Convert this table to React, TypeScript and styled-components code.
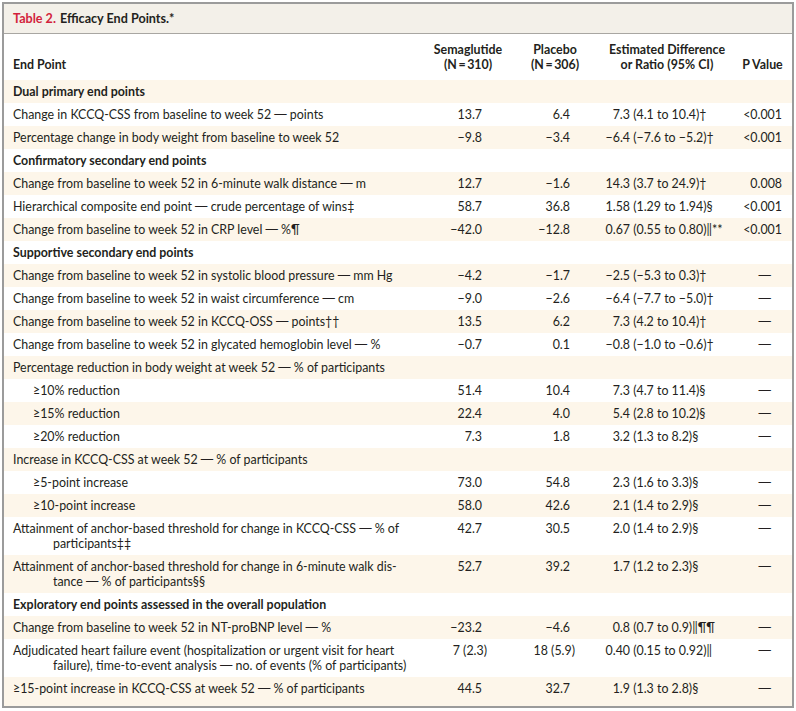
import React from 'react';
import styled, { createGlobalStyle } from 'styled-components';

const GlobalStyle = createGlobalStyle`
    html, body {
        margin: 0;
        padding: 0;
        background: #ffffff;
    }
    body {
        font-family: Lato, "Open Sans", "Liberation Sans", sans-serif;
        color: #231f20;
    }
`;

const Frame = styled.div`
    margin: 2px;
    width: 788px;
    border: 2px solid #9b9b9b;
    background: #ffffff;
`;

const TitleBar = styled.div`
    height: 29px;
    padding: 0 9px;
    display: flex;
    align-items: center;
    background: #f3f0e9;
    border-bottom: 1px solid #a8a6a2;
    font-size: 12.6px;
    font-weight: 700;
`;

const TableNo = styled.span`
    color: #d21f3c;
    margin-right: 4px;
`;

const Table = styled.table`
    width: 100%;
    border-collapse: collapse;
    table-layout: fixed;
    font-size: 12.4px;
    line-height: 15px;
`;

const HeadCell = styled.th<{ $align?: 'left' | 'center' }>`
    height: 46px;
    box-sizing: border-box;
    padding: 0 4px 8px;
    vertical-align: bottom;
    text-align: ${(p) => p.$align ?? 'center'};
    font-weight: 700;
    &:first-child {
        padding-left: 9px;
    }
`;

const Body = styled.tbody`
    tr:nth-child(odd) {
        background: #fdf6ea;
    }
    tr:last-child td {
        padding-bottom: 10px;
    }
`;

const Label = styled.td<{ $section?: boolean; $indent?: boolean }>`
    padding: 4px 0 4px ${(p) => (p.$indent ? 29 : 49)}px;
    text-indent: ${(p) => (p.$indent ? 0 : -40)}px;
    font-weight: ${(p) => (p.$section ? 700 : 400)};
    vertical-align: top;
`;

const Num = styled.td<{ $pad: number }>`
    padding: 4px ${(p) => p.$pad}px 4px 0;
    text-align: right;
    vertical-align: top;
    white-space: nowrap;
`;

const Estimate = styled.td`
    padding: 4px 0;
    vertical-align: top;
    white-space: nowrap;
`;

const Point = styled.span`
    display: inline-block;
    width: 29px;
    text-align: right;
`;

const PValue = styled.td<{ $dash?: boolean }>`
    padding: 4px ${(p) => (p.$dash ? 21 : 10)}px 4px 0;
    text-align: right;
    vertical-align: top;
    white-space: nowrap;
`;

// the humanist face has a short em dash; borrow a full-width one
const EmDash = styled.span`
    font-family: "Liberation Sans", Arial, sans-serif;
    font-weight: 400;
    line-height: 15px;
    vertical-align: top;
`;

const Hang = styled.span`
    margin-right: -5px;
`;

type Row = {
    label: string;
    section?: boolean;
    indent?: boolean;
    sema?: string;
    placebo?: string;
    point?: string;
    ci?: string;
    p?: string;
};

const rows: Row[] = [
    { label: 'Dual primary end points', section: true },
    { label: 'Change in KCCQ-CSS from baseline to week 52 — points', sema: '13.7', placebo: '6.4', point: '7.3', ci: '(4.1 to 10.4)†', p: '<0.001' },
    { label: 'Percentage change in body weight from baseline to week 52', sema: '−9.8', placebo: '−3.4', point: '−6.4', ci: '(−7.6 to −5.2)†', p: '<0.001' },
    { label: 'Confirmatory secondary end points', section: true },
    { label: 'Change from baseline to week 52 in 6-minute walk distance — m', sema: '12.7', placebo: '−1.6', point: '14.3', ci: '(3.7 to 24.9)†', p: '0.008' },
    { label: 'Hierarchical composite end point — crude percentage of wins‡', sema: '58.7', placebo: '36.8', point: '1.58', ci: '(1.29 to 1.94)§', p: '<0.001' },
    { label: 'Change from baseline to week 52 in CRP level — %¶', sema: '−42.0', placebo: '−12.8', point: '0.67', ci: '(0.55 to 0.80)‖**', p: '<0.001' },
    { label: 'Supportive secondary end points', section: true },
    { label: 'Change from baseline to week 52 in systolic blood pressure — mm Hg', sema: '−4.2', placebo: '−1.7', point: '−2.5', ci: '(−5.3 to 0.3)†', p: '—' },
    { label: 'Change from baseline to week 52 in waist circumference — cm', sema: '−9.0', placebo: '−2.6', point: '−6.4', ci: '(−7.7 to −5.0)†', p: '—' },
    { label: 'Change from baseline to week 52 in KCCQ-OSS — points††', sema: '13.5', placebo: '6.2', point: '7.3', ci: '(4.2 to 10.4)†', p: '—' },
    { label: 'Change from baseline to week 52 in glycated hemoglobin level — %', sema: '−0.7', placebo: '0.1', point: '−0.8', ci: '(−1.0 to −0.6)†', p: '—' },
    { label: 'Percentage reduction in body weight at week 52 — % of participants' },
    { label: '≥10% reduction', indent: true, sema: '51.4', placebo: '10.4', point: '7.3', ci: '(4.7 to 11.4)§', p: '—' },
    { label: '≥15% reduction', indent: true, sema: '22.4', placebo: '4.0', point: '5.4', ci: '(2.8 to 10.2)§', p: '—' },
    { label: '≥20% reduction', indent: true, sema: '7.3', placebo: '1.8', point: '3.2', ci: '(1.3 to 8.2)§', p: '—' },
    { label: 'Increase in KCCQ-CSS at week 52 — % of participants' },
    { label: '≥5-point increase', indent: true, sema: '73.0', placebo: '54.8', point: '2.3', ci: '(1.6 to 3.3)§', p: '—' },
    { label: '≥10-point increase', indent: true, sema: '58.0', placebo: '42.6', point: '2.1', ci: '(1.4 to 2.9)§', p: '—' },
    { label: 'Attainment of anchor-based threshold for change in KCCQ-CSS — % of participants‡‡', sema: '42.7', placebo: '30.5', point: '2.0', ci: '(1.4 to 2.9)§', p: '—' },
    { label: 'Attainment of anchor-based threshold for change in 6-minute walk dis-|tance — % of participants§§', sema: '52.7', placebo: '39.2', point: '1.7', ci: '(1.2 to 2.3)§', p: '—' },
    { label: 'Exploratory end points assessed in the overall population', section: true },
    { label: 'Change from baseline to week 52 in NT-proBNP level — %', sema: '−23.2', placebo: '−4.6', point: '0.8', ci: '(0.7 to 0.9)‖¶¶', p: '—' },
    { label: 'Adjudicated heart failure event (hospitalization or urgent visit for heart failure), time-to-event analysis — no. of events (% of participants)', sema: '7 (2.3)', placebo: '18 (5.9)', point: '0.40', ci: '(0.15 to 0.92)‖', p: '—' },
    { label: '≥15-point increase in KCCQ-CSS at week 52 — % of participants', sema: '44.5', placebo: '32.7', point: '1.9', ci: '(1.3 to 2.8)§', p: '—' },
];

// "|" marks the printed line break of "dis-tance"
const withDashes = (text: string) =>
    text.split('—').map((chunk, i) => (
        <React.Fragment key={i}>
            {i > 0 && <EmDash>—</EmDash>}
            {chunk}
        </React.Fragment>
    ));

const renderLabel = (text: string) =>
    text.split('|').map((line, i) => (
        <React.Fragment key={i}>
            {i > 0 && <br />}
            {withDashes(line)}
        </React.Fragment>
    ));

const renderCount = (v: string) =>
    v.includes('(') ? <Hang>{v}</Hang> : v;

const App: React.FC = () => {
    return (
        <>
            <GlobalStyle />
            <Frame>
                <TitleBar>
                    <TableNo>Table 2.</TableNo>
                    Efficacy End Points.*
                </TitleBar>
                <Table>
                    <colgroup>
                        <col style={{ width: 423 }} />
                        <col style={{ width: 82 }} />
                        <col style={{ width: 92 }} />
                        <col style={{ width: 132 }} />
                        <col style={{ width: 59 }} />
                    </colgroup>
                    <thead>
                        <tr>
                            <HeadCell $align="left">End Point</HeadCell>
                            <HeadCell>Semaglutide<br />(N{'\u2009'}={'\u2009'}310)</HeadCell>
                            <HeadCell>Placebo<br />(N{'\u2009'}={'\u2009'}306)</HeadCell>
                            <HeadCell>Estimated Difference<br />or Ratio (95% CI)</HeadCell>
                            <HeadCell>P Value</HeadCell>
                        </tr>
                    </thead>
                    <Body>
                        {rows.map((r) => (
                            <tr key={r.label}>
                                <Label $section={r.section} $indent={r.indent}>
                                    {renderLabel(r.label)}
                                </Label>
                                <Num $pad={27}>{r.sema && renderCount(r.sema)}</Num>
                                <Num $pad={31}>{r.placebo && renderCount(r.placebo)}</Num>
                                <Estimate>
                                    {r.point && (
                                        <>
                                            <Point>{r.point}</Point> {r.ci}
                                        </>
                                    )}
                                </Estimate>
                                <PValue $dash={r.p === '—'}>
                                    {r.p === '—' ? <EmDash>—</EmDash> : r.p}
                                </PValue>
                            </tr>
                        ))}
                    </Body>
                </Table>
            </Frame>
        </>
    );
};

export default App;
